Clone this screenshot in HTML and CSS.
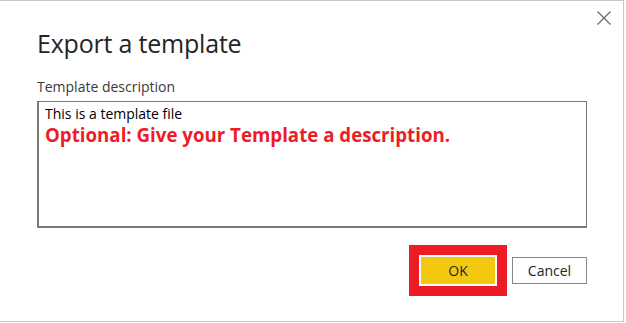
FILE: index.html
```html
<!DOCTYPE html>
<html lang="en">
<head>
    <meta charset="UTF-8">
    <meta name="viewport" content="width=device-width, initial-scale=1.0">
    <title>Export a template</title>
    <link rel="stylesheet" href="styles.css">
</head>
<body>

<!-- Export dialog -->
<div class="dialog">
    <button class="close" aria-label="Close">
        <svg width="14" height="14" viewBox="0 0 14 14">
            <path d="M0.5 0.5 L13.5 13.5 M13.5 0.5 L0.5 13.5" stroke="#6b6b6b" stroke-width="1.2" fill="none"/>
        </svg>
    </button>

    <h1 class="title">Export a template</h1>

    <label class="field-label">Template description</label>
    <div class="textbox">
        <div class="value">This is a template file</div>
        <div class="note">Optional: Give your Template a description.</div>
    </div>

    <!-- Buttons -->
    <div class="actions">
        <span class="highlight">
            <button class="btn primary">OK</button>
        </span>
        <button class="btn">Cancel</button>
    </div>
</div>

</body>
</html>
```

FILE: styles.css
```css
body {
    margin: 0;
    background-color: #fff;
    font-family: "Open Sans", "Noto Sans", sans-serif;
}
.dialog {
    position: relative;
    box-sizing: border-box;
    width: 624px;
    height: 322px;
    padding: 0 36px 0 37px;
    background-color: #fff;
    border-top: 1px solid #c8c8c8;
    border-right: 1px solid #c8c8c8;
    border-bottom: 1px solid #c8c8c8;
}
.close {
    position: absolute;
    top: 10px;
    right: 12px;
    padding: 0;
    border: none;
    background: none;
    width: 14px;
    height: 14px;
    cursor: pointer;
}
.close svg {
    display: block;
}
.title {
    margin: 0;
    padding-top: 24px;
    font-size: 25px;
    font-weight: normal;
    line-height: 36px;
    color: #252423;
    letter-spacing: -0.2px;
}
.field-label {
    display: block;
    margin-top: 16px;
    font-size: 14px;
    line-height: 20px;
    color: #3b3a39;
}
.textbox {
    box-sizing: border-box;
    height: 127px;
    margin-top: 4px;
    padding: 3px 6px;
    border: 1px solid #7a7a7a;
    border-left-width: 2px;
    border-bottom-width: 2px;
}
.value {
    font-size: 14px;
    line-height: 18px;
    color: #000;
}
.note {
    font-size: 18.7px;
    font-weight: bold;
    line-height: 24px;
    color: #ee1c25;
}
.actions {
    display: flex;
    justify-content: flex-end;
    align-items: center;
    gap: 5px;
    margin-top: 17px;
}
.highlight {
    display: flex;
    padding: 10px;
    background-color: #ed1c24;
}
.btn {
    box-sizing: border-box;
    width: 75px;
    height: 27px;
    padding: 0;
    font-family: "Open Sans", "Noto Sans", sans-serif;
    font-size: 14px;
    color: #252423;
    background-color: #fff;
    border: 1px solid #8a8886;
    cursor: pointer;
}
.primary {
    width: 78px;
    height: 31px;
    background-color: #f2c811;
    border: 2px solid #fff;
}
```
